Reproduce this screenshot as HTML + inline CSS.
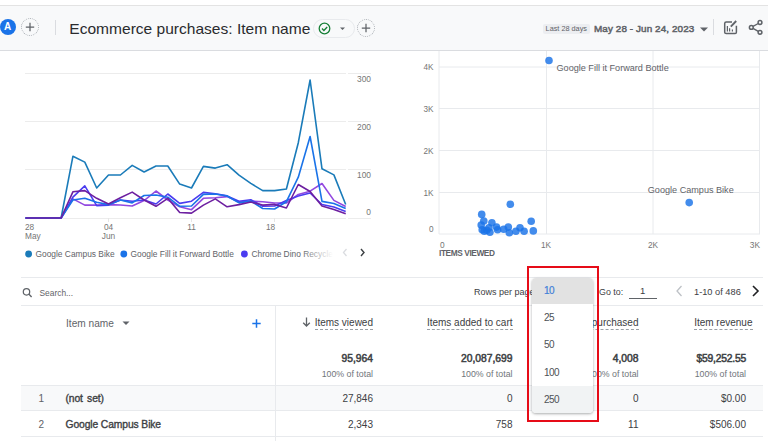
<!DOCTYPE html>
<html><head><meta charset="utf-8">
<style>
*{box-sizing:border-box;margin:0;padding:0}
html,body{width:768px;height:441px;overflow:hidden;background:#fff;font-family:"Liberation Sans",sans-serif;color:#202124}
.abs{position:absolute}
#hdr{position:absolute;left:0;top:5px;width:768px;height:46px;background:#f8f9fa;border-top:1px solid #e3e3e3;border-bottom:1px solid #dadce0}
.t{position:absolute;white-space:nowrap;line-height:1}
</style></head><body>
<div id="hdr"></div>
<!-- header left -->
<div class="abs" style="left:-0.5px;top:19.4px;width:16px;height:16px;border-radius:50%;background:#1a73e8;color:#fff;font-size:10px;font-weight:bold;text-align:center;line-height:16px">A</div>
<div class="abs" style="left:21px;top:18.4px;width:18px;height:18px;border-radius:50%;border:1px dotted #a8adb3"></div>
<svg class="abs" style="left:21px;top:18.4px" width="18" height="18"><path d="M9 4.8V13.2M4.8 9H13.2" stroke="#5f6368" stroke-width="1.25"/></svg>
<div class="abs" style="left:55px;top:20px;width:1px;height:15px;background:#dadce0"></div>
<div class="t" style="left:69.3px;top:21px;font-size:15.55px;color:#2a2b2e">Ecommerce purchases: Item name</div>
<div class="abs" style="left:313px;top:19px;width:42px;height:19px;border-radius:10px;border:1px solid #e8eaed;background:#f8f9fa"></div>
<svg class="abs" style="left:317px;top:21px" width="34" height="15"><circle cx="7.5" cy="7.5" r="5.3" fill="none" stroke="#188038" stroke-width="1.3"/><path d="M5 7.6L6.9 9.4L10.2 6" fill="none" stroke="#188038" stroke-width="1.4"/><path d="M23 6.5L28 6.5L25.5 9Z" fill="#5f6368"/></svg>
<div class="abs" style="left:357px;top:18.5px;width:18px;height:18px;border-radius:50%;border:1px dotted #a8adb3"></div>
<svg class="abs" style="left:357px;top:18.5px" width="18" height="18"><path d="M9 4.8V13.2M4.8 9H13.2" stroke="#5f6368" stroke-width="1.25"/></svg>
<!-- header right -->
<div class="abs" style="left:543px;top:23.5px;width:47px;height:10.5px;background:#eceef1;border-radius:2px"></div>
<div class="t" style="left:545.6px;top:25px;font-size:7.3px;color:#5f6368">Last 28 days</div>
<div class="t" style="left:594px;top:23.8px;font-size:9.9px;letter-spacing:0.1px;-webkit-text-stroke:0.5px #5f6368;color:#5f6368">May 28 - Jun 24, 2023</div>
<svg class="abs" style="left:699px;top:26px" width="10" height="6"><path d="M1 1.5L9 1.5L5 5.5Z" fill="#5f6368"/></svg>
<div class="abs" style="left:713px;top:19px;width:1px;height:16px;background:#dadce0"></div>
<svg class="abs" style="left:722px;top:19px" width="18" height="17"><path d="M10 2.9H4.2Q2.7 2.9 2.7 4.4V13.3Q2.7 14.6 4.2 14.6H13.1Q14.4 14.6 14.4 13.3V6.8" fill="none" stroke="#5f6368" stroke-width="1.5"/><path d="M8.8 7.6L14.2 2" stroke="#5f6368" stroke-width="1.9"/><path d="M5.4 7V12.6M7.6 9.2V12.6M10.4 10.4V12.6" stroke="#5f6368" stroke-width="1.2"/></svg>
<svg class="abs" style="left:748px;top:19px" width="17" height="17"><circle cx="12" cy="3.5" r="1.9" fill="none" stroke="#5f6368" stroke-width="1.5"/><circle cx="3.3" cy="8.4" r="1.9" fill="none" stroke="#5f6368" stroke-width="1.5"/><circle cx="12" cy="13.3" r="1.9" fill="none" stroke="#5f6368" stroke-width="1.5"/><path d="M5 7.4L10.3 4.5M5 9.4L10.3 12.3" stroke="#5f6368" stroke-width="1.4"/></svg>

<!-- line chart -->
<svg class="abs" style="left:0;top:0" width="384" height="270">
<g stroke="#ececec" stroke-width="1">
<path d="M25 73.5H346M348 73.5H371M25 121.5H346M348 121.5H371M25 169.5H346M348 169.5H371M25 218.5H346M348 218.5H371"/>
</g>
<g stroke="#e6e6e6"><path d="M108.5 218V222M191.5 218V222M274.5 218V222"/></g>
<g fill="none" stroke-width="1.6" stroke-linejoin="round">
<path d="M25.5,218.0 L37.4,218.0 L49.2,218.0 L61.1,218.0 L72.9,156.3 L84.8,162.1 L96.7,188.0 L108.5,175.0 L120.4,175.0 L132.2,165.4 L144.1,172.0 L156.0,166.0 L167.8,166.0 L179.7,184.1 L191.5,188.0 L203.4,166.4 L215.3,168.1 L227.1,164.7 L239.0,175.2 L250.8,183.4 L262.7,190.6 L274.6,190.6 L286.4,189.0 L298.3,142.7 L310.1,80.0 L322.0,168.8 L333.9,174.9 L345.7,204.5" stroke="#1a7bb9" />
<path d="M25.5,218.0 L37.4,218.0 L49.2,218.0 L61.1,218.0 L72.9,198.9 L84.8,205.1 L96.7,205.1 L108.5,204.6 L120.4,205.0 L132.2,206.0 L144.1,200.6 L156.0,191.0 L167.8,200.0 L179.7,206.8 L191.5,209.7 L203.4,198.3 L215.3,197.8 L227.1,196.6 L239.0,202.0 L250.8,201.2 L262.7,201.7 L274.6,203.0 L286.4,203.0 L298.3,194.4 L310.1,191.2 L322.0,183.5 L333.9,200.4 L345.7,206.5" stroke="#9248e0" />
<path d="M25.5,218.0 L37.4,218.0 L49.2,218.0 L61.1,218.0 L72.9,197.2 L84.8,185.9 L96.7,205.7 L108.5,205.1 L120.4,200.0 L132.2,201.2 L144.1,200.0 L156.0,204.0 L167.8,194.0 L179.7,203.4 L191.5,201.2 L203.4,192.4 L215.3,193.8 L227.1,195.9 L239.0,201.2 L250.8,199.7 L262.7,206.2 L274.6,206.0 L286.4,200.5 L298.3,196.0 L310.1,193.0 L322.0,204.5 L333.9,207.0 L345.7,211.6" stroke="#4b3cf0" />
<path d="M25.5,218.0 L37.4,218.0 L49.2,218.0 L61.1,218.0 L72.9,200.0 L84.8,198.3 L96.7,202.3 L108.5,204.6 L120.4,200.0 L132.2,202.9 L144.1,195.5 L156.0,195.0 L167.8,197.2 L179.7,206.3 L191.5,206.0 L203.4,194.4 L215.3,194.0 L227.1,196.0 L239.0,202.9 L250.8,201.0 L262.7,208.5 L274.6,209.0 L286.4,201.7 L298.3,177.2 L310.1,136.5 L322.0,201.4 L333.9,203.5 L345.7,208.6" stroke="#1a73e8" />
<path d="M25.5,218.0 L37.4,218.0 L49.2,218.0 L61.1,218.0 L72.9,191.8 L84.8,190.6 L96.7,198.3 L108.5,204.0 L120.4,197.8 L132.2,192.1 L144.1,200.0 L156.0,206.3 L167.8,198.3 L179.7,212.5 L191.5,213.1 L203.4,205.1 L215.3,198.9 L227.1,206.8 L239.0,204.6 L250.8,202.0 L262.7,205.1 L274.6,204.4 L286.4,208.0 L298.3,184.5 L310.1,191.5 L322.0,205.9 L333.9,209.6 L345.7,213.7" stroke="#6d1fa0" />
</g>
<g font-family="Liberation Sans" font-size="8.4" fill="#757575" text-anchor="end">
<text x="371" y="82">300</text><text x="371" y="130">200</text><text x="371" y="178">100</text><text x="371" y="215">0</text>
</g>
<g font-family="Liberation Sans" font-size="8.3" fill="#757575">
<text x="25" y="230">28</text><text x="25" y="238.5">May</text>
<text x="108.5" y="230" text-anchor="middle">04</text><text x="108.5" y="238.5" text-anchor="middle">Jun</text>
<text x="191.5" y="230" text-anchor="middle">11</text>
<text x="270.5" y="230" text-anchor="middle">18</text>
</g>
<circle cx="28.6" cy="254" r="3.4" fill="#1a7bb9"/>
<circle cx="123.8" cy="254" r="3.4" fill="#1a73e8"/>
<circle cx="244.4" cy="254" r="3.4" fill="#4b3cf0"/>
<defs><linearGradient id="fade" x1="0" x2="1"><stop offset="0.6" stop-color="#5f6368"/><stop offset="1" stop-color="#fff"/></linearGradient></defs>
<g font-family="Liberation Sans" font-size="8.4" fill="#5f6368">
<text x="35.5" y="257">Google Campus Bike</text>
<text x="130.5" y="257">Google Fill it Forward Bottle</text>
<text x="251.5" y="257" fill="url(#fade)">Chrome Dino Recycle</text>
</g>
<path d="M346.5 249L343.5 252.5L346.5 256" fill="none" stroke="#dadce0" stroke-width="1.3"/>
<path d="M361 249L364 252.5L361 256" fill="none" stroke="#3c4043" stroke-width="1.4"/>
</svg>

<!-- scatter -->
<svg class="abs" style="left:384px;top:0" width="384" height="270">
<g stroke="#e8eaed" stroke-width="1">
<path d="M55 67H376M55 108.5H376M55 150.5H376M55 192.5H376M55 234H376"/>
<path d="M55 51V234M162.5 51V234M269 51V234M375.5 51V234"/>
</g>
<g font-family="Liberation Sans" font-size="8.2" fill="#757575" text-anchor="end">
<text x="49.5" y="70">4K</text><text x="49.5" y="112">3K</text><text x="49.5" y="154">2K</text><text x="49.5" y="195.5">1K</text><text x="49.5" y="232">0</text>
</g>
<g font-family="Liberation Sans" font-size="8.3" fill="#757575">
<text x="56" y="248">0</text><text x="162" y="248" text-anchor="middle">1K</text><text x="269" y="248" text-anchor="middle">2K</text><text x="376" y="248" text-anchor="end">3K</text>
</g>
<text x="55" y="255.8" font-family="Liberation Sans" font-size="8.3" letter-spacing="-0.4" font-weight="bold" fill="#5f6368">ITEMS VIEWED</text>
<g fill="#1a73e8" fill-opacity="0.82">
<circle cx="126.3" cy="204.2" r="3.8"/>
<circle cx="97.7" cy="214.4" r="3.8"/>
<circle cx="147.2" cy="221.3" r="3.8"/>
<circle cx="99.8" cy="221.0" r="3.8"/>
<circle cx="107.9" cy="222.8" r="3.8"/>
<circle cx="97.2" cy="225.1" r="3.8"/>
<circle cx="112.5" cy="227.1" r="3.8"/>
<circle cx="124.3" cy="227.1" r="3.8"/>
<circle cx="136.0" cy="227.7" r="3.8"/>
<circle cx="98.2" cy="229.7" r="3.8"/>
<circle cx="102.8" cy="230.2" r="3.8"/>
<circle cx="105.9" cy="232.2" r="3.8"/>
<circle cx="119.7" cy="229.2" r="3.8"/>
<circle cx="125.3" cy="232.8" r="3.8"/>
<circle cx="131.9" cy="231.2" r="3.8"/>
<circle cx="140.1" cy="231.2" r="3.8"/>
<circle cx="149.3" cy="230.9" r="3.8"/>
<circle cx="100.3" cy="231.2" r="3.8"/>
<circle cx="113.6" cy="229.7" r="3.8"/>
<circle cx="104.9" cy="227.7" r="3.8"/>
<circle cx="165.0" cy="60.5" r="3.8"/>
<circle cx="305.2" cy="202.6" r="3.8"/>
</g>
<g font-family="Liberation Sans" font-size="9.1" fill="#5f6368">
<text x="172.5" y="70.5">Google Fill it Forward Bottle</text>
<text x="263.8" y="193">Google Campus Bike</text>
</g>
</svg>

<!-- table -->
<div class="abs" style="left:21px;top:277px;width:742px;height:1px;background:#e8eaed"></div>
<div class="abs" style="left:21px;top:305px;width:742px;height:1px;background:#e8eaed"></div>
<svg class="abs" style="left:21px;top:287px" width="12" height="12"><circle cx="5.5" cy="4.8" r="3.2" fill="none" stroke="#5f6368" stroke-width="1.25"/><path d="M7.8 7.1L10.6 9.9" stroke="#5f6368" stroke-width="1.35"/></svg>
<div class="t" style="left:39.5px;top:288.8px;font-size:8.4px;color:#5f6368">Search...</div>
<div class="t" style="left:474px;top:287.5px;font-size:9px;color:#3c4043">Rows per page</div>
<div class="t" style="left:599px;top:287.5px;font-size:8.9px;color:#3c4043">Go to:</div>
<div class="abs" style="left:629px;top:297.5px;width:28px;height:1px;background:#5f6368"></div>
<div class="t" style="left:640px;top:285.5px;font-size:9.5px;color:#3c4043">1</div>
<svg class="abs" style="left:674px;top:284px" width="10" height="14"><path d="M7.5 2L3 7L7.5 12" fill="none" stroke="#bdc1c6" stroke-width="1.3"/></svg>
<div class="t" style="left:694px;top:287.5px;font-size:9.25px;color:#3c4043">1-10 of 486</div>
<svg class="abs" style="left:750px;top:284px" width="12" height="14"><path d="M3 2L8 7L3 12" fill="none" stroke="#202124" stroke-width="1.6"/></svg>

<div class="abs" style="left:275px;top:306px;width:1px;height:135px;background:#e8eaed"></div>
<div class="t" style="left:66px;top:319.1px;font-size:10.15px;color:#5f6368">Item name</div>
<svg class="abs" style="left:122px;top:321px" width="8" height="5"><path d="M0.5 0.5H7.5L4 4Z" fill="#5f6368"/></svg>
<svg class="abs" style="left:251px;top:318px" width="11" height="11"><path d="M5.5 1.3V9.7M1.3 5.5H9.7" stroke="#1a73e8" stroke-width="1.5"/></svg>
<svg class="abs" style="left:302px;top:317px" width="9" height="10"><path d="M4.5 0.5V9M1.2 5.7L4.5 9L7.8 5.7" fill="none" stroke="#5f6368" stroke-width="1.3"/></svg>
<div class="t hd" style="right:395px;top:318px">Items viewed</div>
<div class="t hd" style="right:255.5px;top:318px">Items added to cart</div>
<div class="t hd" style="right:129.5px;top:318px">Items purchased</div>
<div class="t hd" style="right:15.5px;top:318px">Item revenue</div>

<div class="t tot" style="right:395px;top:353.5px">95,964</div>
<div class="t tot" style="right:255.5px;top:353.5px">20,087,699</div>
<div class="t tot" style="right:129.5px;top:353.5px">4,008</div>
<div class="t tot" style="right:22px;top:353.5px;letter-spacing:-0.2px">$59,252.55</div>
<div class="t pct" style="right:395px;top:369px">100% of total</div>
<div class="t pct" style="right:255.5px;top:369px">100% of total</div>
<div class="t pct" style="right:129.5px;top:369px">100% of total</div>
<div class="t pct" style="right:22px;top:369px">100% of total</div>

<div class="abs" style="left:21px;top:384.5px;width:742px;height:26px;background:#f8f9fa;border-top:1px solid #e8eaed;border-bottom:1px solid #e8eaed"></div>
<div class="abs" style="left:21px;top:436px;width:742px;height:1px;background:#e8eaed"></div>
<div class="abs" style="left:275px;top:385px;width:1px;height:56px;background:#e8eaed"></div>
<div class="t rw" style="left:38.5px;top:394px;color:#5f6368">1</div>
<div class="t rw b" style="left:65.5px;top:394px;word-spacing:1.5px">(not set)</div>
<div class="t rw" style="right:395px;top:394px">27,846</div>
<div class="t rw" style="right:255.5px;top:394px">0</div>
<div class="t rw" style="right:129.5px;top:394px">0</div>
<div class="t rw" style="right:22px;top:394px">$0.00</div>
<div class="t rw" style="left:38.5px;top:420px;color:#5f6368">2</div>
<div class="t rw b" style="left:65.5px;top:420px">Google Campus Bike</div>
<div class="t rw" style="right:395px;top:420px">2,343</div>
<div class="t rw" style="right:255.5px;top:420px">758</div>
<div class="t rw" style="right:129.5px;top:420px">11</div>
<div class="t rw" style="right:22px;top:420px">$506.00</div>

<!-- dropdown -->
<div class="abs" style="left:532px;top:277.5px;width:61px;height:135.5px;background:#fff;border-radius:4px;box-shadow:0 1px 3px rgba(60,64,67,.3),0 1px 2px rgba(60,64,67,.15);overflow:hidden">
 <div style="height:26px;background:#e2e2e2"></div>
 <div style="position:absolute;left:0;top:108px;width:61px;height:28px;background:#f1f3f4"></div>
</div>
<div class="t dd" style="left:544px;top:286px;color:#3f7fd8;-webkit-text-stroke:0.2px #3f7fd8">10</div>
<div class="t dd" style="left:544px;top:313px">25</div>
<div class="t dd" style="left:544px;top:340px">50</div>
<div class="t dd" style="left:544px;top:368px">100</div>
<div class="t dd" style="left:544px;top:395px">250</div>
<div class="abs" style="left:527px;top:266px;width:72px;height:155.5px;border:2px solid #e60c18"></div>
<style>
.hd{font-size:10px;color:#3c4043;border-bottom:1px dashed #9aa0a6;padding-bottom:1px}
.tot{font-size:10.3px;-webkit-text-stroke:0.5px #3c4043;color:#3c4043}
.pct{font-size:8.8px;color:#70757a;margin-top:1px}
.rw{font-size:10px;color:#3c4043}
.b{font-size:10.3px;letter-spacing:-0.1px;-webkit-text-stroke:0.35px #3c4043;color:#3c4043}
.dd{font-size:10px;letter-spacing:-0.5px;color:#4d5156}
</style>
</body></html>
